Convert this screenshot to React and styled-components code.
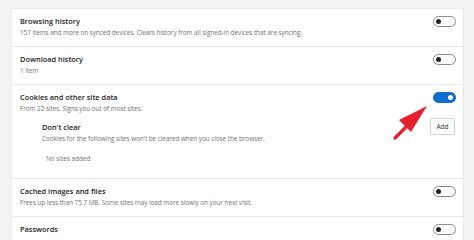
import React from 'react'
import styled, { createGlobalStyle } from 'styled-components'

const Global = createGlobalStyle`
  html, body { margin: 0; padding: 0; background: #f3f3f3; }
  body { font-family: "Open Sans", "Noto Sans", sans-serif; color: #1b1b1b; }
`

const Page = styled.div`
  width: 474px;
  height: 240px;
  overflow: hidden;
  box-sizing: border-box;
  padding: 8px 10px 0 11px;
  position: relative;
`

const Card = styled.div`
  background: #fff;
  border-right: 1px solid #e6e6e6;
  border-top: 1px solid #ececec;
  border-left: 1px solid #ececec;
  height: 260px;
`

const Row = styled.div`
  box-sizing: border-box;
  height: ${p => p.h}px;
  padding: 6px 7px 0 8px;
  border-bottom: 1px solid #e8e8e8;
`

const Head = styled.div`
  display: flex;
  justify-content: space-between;
  align-items: flex-start;
`

const Title = styled.div`
  font-size: 7.4px;
  font-weight: 600;
  line-height: 12px;
  color: #222;
`

const Sub = styled.div`
  font-size: 6.4px;
  line-height: 12px;
  color: #737373;
  letter-spacing: -0.05px;
`

const Toggle = styled.div`
  box-sizing: border-box;
  width: 23px;
  height: 11px;
  margin-top: 1px;
  border-radius: 6px;
  border: 1px solid ${p => (p.on ? '#0f6cd0' : '#8a8a8a')};
  background: ${p => (p.on ? '#0f6cd0' : '#fff')};
  display: flex;
  align-items: center;
  justify-content: ${p => (p.on ? 'flex-end' : 'flex-start')};
  padding: 0 2px;
  &::after {
    content: '';
    width: 5px;
    height: 5px;
    border-radius: 50%;
    background: ${p => (p.on ? '#fff' : '#222')};
  }
`

const Nested = styled.div`
  padding: 6px 1px 0 22px;
`

const AddButton = styled.button`
  box-sizing: border-box;
  width: 25px;
  height: 17px;
  margin-top: -3px;
  border: 1px solid #d4d4d4;
  background: #fff;
  border-radius: 2px;
  font-family: inherit;
  font-size: 6.6px;
  color: #333;
  padding: 0;
`

const Empty = styled.div`
  font-size: 6.4px;
  line-height: 12px;
  color: #737373;
  padding: 8px 0 0 4px;
`

const Arrow = styled.svg`
  position: absolute;
  left: 390px;
  top: 100px;
`

export default function App() {
  return (
    <Page>
      <Global />
      <Card>
        <Row h={38}>
          <Head>
            <div>
              <Title>Browsing history</Title>
              <Sub>157 items and more on synced devices. Clears history from all signed-in devices that are syncing.</Sub>
            </div>
            <Toggle />
          </Head>
        </Row>
        <Row h={38}>
          <Head>
            <div>
              <Title>Download history</Title>
              <Sub>1 item</Sub>
            </div>
            <Toggle />
          </Head>
        </Row>
        <Row h={94}>
          <Head>
            <div>
              <Title>Cookies and other site data</Title>
              <Sub>From 22 sites. Signs you out of most sites.</Sub>
            </div>
            <Toggle on />
          </Head>
          <Nested>
            <Head>
              <div>
                <Title>Don't clear</Title>
                <Sub>Cookies for the following sites won't be cleared when you close the browser.</Sub>
              </div>
              <AddButton>Add</AddButton>
            </Head>
            <Empty>No sites added</Empty>
          </Nested>
        </Row>
        <Row h={38}>
          <Head>
            <div>
              <Title>Cached images and files</Title>
              <Sub>Frees up less than 75.7 MB. Some sites may load more slowly on your next visit.</Sub>
            </div>
            <Toggle />
          </Head>
        </Row>
        <Row h={38}>
          <Head>
            <div>
              <Title>Passwords</Title>
            </div>
            <Toggle />
          </Head>
        </Row>
      </Card>
      <Arrow width="44" height="44" viewBox="0 0 44 44">
        <line x1="5" y1="38" x2="22" y2="21" stroke="#e5212b" strokeWidth="3.2" strokeLinecap="round" />
        <polygon points="37,6 9,20 21,32" fill="#e5212b" />
      </Arrow>
    </Page>
  )
}
